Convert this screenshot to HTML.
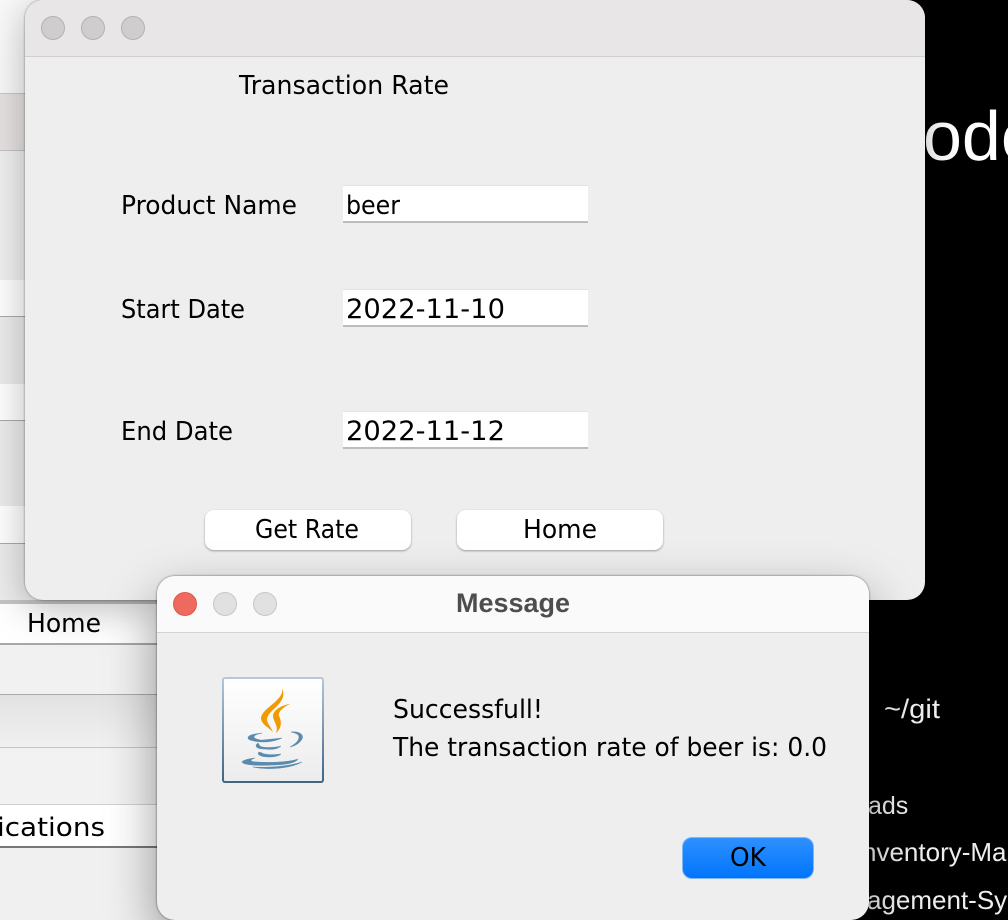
<!DOCTYPE html>
<html><head><meta charset="utf-8">
<style>
html,body{margin:0;padding:0;width:1008px;height:920px;overflow:hidden;background:#000}
.a{position:absolute}
svg{position:absolute;left:0;top:0}
text{font-family:"DejaVu Sans","Liberation Sans",sans-serif;font-size:26px;fill:#000}
.d{font-size:27px}
.h{font-family:"Liberation Sans",sans-serif;fill:#eee}
.tf{position:absolute;left:343px;width:245px;height:38px;background:#fff;border-top:1px solid #e2e2e2;border-bottom:2px solid #bdbdbd;box-sizing:border-box}
.btn{position:absolute;top:510px;width:206px;height:40px;background:#fff;border-radius:9px;box-shadow:0 1px 2px rgba(0,0,0,.35)}
.dot{position:absolute;width:24px;height:24px;border-radius:50%;box-sizing:border-box}
</style></head>
<body>
<div class="a" style="left:0;top:0;width:180px;height:920px;background:#efefef"></div>
<div class="a" style="left:0;top:0;width:40px;height:93px;background:#f9f9f9"></div>
<div class="a" style="left:0;top:93px;width:40px;height:58px;background:#e6e2e2;border-top:1px solid #c8c8c8;border-bottom:1px solid #c4c4c4;box-sizing:border-box"></div>
<div class="a" style="left:0;top:151px;width:40px;height:129px;background:#f0f0f0"></div>
<div class="a" style="left:0;top:280px;width:40px;height:37px;background:#fff;border-bottom:1px solid #aaa;box-sizing:border-box"></div>
<div class="a" style="left:0;top:317px;width:40px;height:67px;background:#ececec"></div>
<div class="a" style="left:0;top:384px;width:40px;height:37px;background:#fff;border-bottom:1px solid #aaa;box-sizing:border-box"></div>
<div class="a" style="left:0;top:421px;width:40px;height:85px;background:#ececec"></div>
<div class="a" style="left:0;top:506px;width:40px;height:38px;background:#fff;border-bottom:1px solid #aaa;box-sizing:border-box"></div>
<div class="a" style="left:0;top:544px;width:40px;height:60px;background:#ececec"></div>
<div class="a" style="left:0;top:600px;width:180px;height:5px;background:#c4c4c4"></div>
<div class="a" style="left:0;top:604px;width:180px;height:41px;background:#fff;border-bottom:2px solid #a8a8a8;box-sizing:border-box"></div>
<div class="a" style="left:0;top:645px;width:180px;height:50px;background:#f1f1f1;border-bottom:1px solid #a9a9a9;box-sizing:border-box"></div>
<div class="a" style="left:0;top:695px;width:180px;height:53px;background:linear-gradient(180deg,#e2e2e2,#f0f0f0);border-bottom:1px solid #c4c4c4;box-sizing:border-box"></div>
<div class="a" style="left:0;top:748px;width:180px;height:57px;background:#f2f2f2;border-bottom:1px solid #d0d0d0;box-sizing:border-box"></div>
<div class="a" style="left:0;top:805px;width:180px;height:43px;background:#fff;border-bottom:2px solid #777;box-sizing:border-box"></div>
<div class="a" style="left:0;top:848px;width:180px;height:72px;background:#f0f0f0"></div>

<svg width="1008" height="920">
<text x="27" y="632" textLength="74" lengthAdjust="spacingAndGlyphs">Home</text>
<text x="-3" y="836" textLength="108" lengthAdjust="spacingAndGlyphs">ications</text>
<text class="h" x="923" y="160" style="font-size:70px;fill:#fff">ode</text>
<text class="h" x="884" y="718" textLength="56" lengthAdjust="spacingAndGlyphs" style="font-size:27px">~/git</text>
<text class="h" x="868" y="814" style="font-size:25px">ads</text>
<text class="h" x="862" y="861" style="font-size:26px">nventory-Ma</text>
<text class="h" x="867" y="909" style="font-size:26px">agement-Sy</text>
</svg>

<div class="a" style="left:25px;top:0;width:900px;height:600px;background:#eeeeee;border-radius:18px;box-shadow:0 0 2px rgba(0,0,0,.45),0 8px 40px rgba(0,0,0,.28)">
<div class="a" style="left:0;top:0;width:900px;height:57px;background:#e8e6e6;border-bottom:1px solid #cfcfcf;box-sizing:border-box;border-radius:18px 18px 0 0"></div>
<div class="dot" style="left:16px;top:16px;background:#cfcdcd;border:1px solid #b3b1b1"></div>
<div class="dot" style="left:56px;top:16px;background:#cfcdcd;border:1px solid #b3b1b1"></div>
<div class="dot" style="left:96px;top:16px;background:#cfcdcd;border:1px solid #b3b1b1"></div>
</div>
<div class="tf" style="top:185px"></div>
<div class="tf" style="top:289px"></div>
<div class="tf" style="top:411px"></div>
<div class="btn" style="left:205px"></div>
<div class="btn" style="left:457px"></div>

<div class="a" style="left:157px;top:576px;width:712px;height:344px;background:#eeeeee;border-radius:18px;box-shadow:0 0 2px rgba(0,0,0,.6),0 20px 50px rgba(0,0,0,.4)">
<div class="a" style="left:0;top:0;width:712px;height:57px;background:#fafafa;border-bottom:1px solid #d2d2d2;box-sizing:border-box;border-radius:18px 18px 0 0"></div>
<div class="dot" style="left:16px;top:16px;background:#ee6a5f;border:1px solid #e0584e"></div>
<div class="dot" style="left:56px;top:16px;background:#e1e1e1;border:1px solid #c6c6c6"></div>
<div class="dot" style="left:96px;top:16px;background:#e1e1e1;border:1px solid #c6c6c6"></div>
</div>

<div class="a" style="left:222px;top:677px;width:102px;height:106px;box-sizing:border-box;border-radius:3px;padding:2px;background:linear-gradient(180deg,#b5c8dc,#3f6484)">
<div style="width:98px;height:102px;border-radius:1px;background:linear-gradient(180deg,#ffffff,#ececec)"></div>
</div>
<div class="a" style="left:682px;top:837px;width:132px;height:42px;box-sizing:border-box;border:1px solid #7fb6f5;border-radius:10px;background:linear-gradient(180deg,#2f90ff,#0075fb)"></div>

<svg width="1008" height="920">
<text x="239" y="94" textLength="210" lengthAdjust="spacingAndGlyphs">Transaction Rate</text>
<text x="121" y="214" textLength="176" lengthAdjust="spacingAndGlyphs">Product Name</text>
<text x="121" y="318" textLength="124" lengthAdjust="spacingAndGlyphs">Start Date</text>
<text x="121" y="440" textLength="112" lengthAdjust="spacingAndGlyphs">End Date</text>
<text x="346" y="214" textLength="54" lengthAdjust="spacingAndGlyphs">beer</text>
<text class="d" x="346" y="318" textLength="159" lengthAdjust="spacingAndGlyphs">2022-11-10</text>
<text class="d" x="346" y="440" textLength="159" lengthAdjust="spacingAndGlyphs">2022-11-12</text>
<text x="255" y="538" textLength="104" lengthAdjust="spacingAndGlyphs">Get Rate</text>
<text x="523" y="538" textLength="74" lengthAdjust="spacingAndGlyphs">Home</text>
<text x="456" y="612" textLength="114" lengthAdjust="spacingAndGlyphs" style="font-weight:bold;fill:#4d4d4d;font-family:'Liberation Sans',sans-serif;font-size:27px">Message</text>
<text x="393" y="718" textLength="150" lengthAdjust="spacingAndGlyphs">Successfull!</text>
<text x="393" y="756" textLength="434" lengthAdjust="spacingAndGlyphs">The transaction rate of beer is: 0.0</text>
<text x="730" y="866" textLength="36" lengthAdjust="spacingAndGlyphs">OK</text>
<path fill="#f09a05" d="M282 688C285 700 262 708 261 718C261 724 268 727 273 732C270 725 265 722 268 716C272 708 288 702 282 688Z"/>
<path fill="#f09a05" d="M290 704C282 705 273 710 273 716C273 721 279 726 276 733C283 727 281 720 279 716C278 711 284 707 290 704Z"/>
<g fill="#5b8bac" stroke="#5b8bac" stroke-width=".5">
<path d="M262 733C254 734 248 735 248 738C248 741 258 742 272 741C262 741 254 739 254 737C254 735 258 734 262 733Z"/>
<path d="M254 741C262 743 274 742 282 738C274 739 262 740 254 741Z"/>
<path d="M291 732C300 731 304 735 302 739C300 743 295 746 290 747C295 744 299 741 299 737C299 734 295 733 291 732Z"/>
<path d="M258 743C254 746 256 749 265 749C272 750 278 749 281 746C274 748 262 748 260 746C259 745 259 744 258 743Z"/>
<path d="M259 752C256 755 262 757 269 757C274 757 279 756 281 754C273 755 265 755 262 753Z"/>
<path d="M255 758C246 759 242 761 242 762C243 765 258 766 272 765C284 765 296 763 298 759C290 762 270 763 258 762C250 762 249 760 255 758Z"/>
<path d="M253 767C266 770 290 769 302 762C290 766 270 768 253 767Z"/>
</g>
</svg>
</body></html>
